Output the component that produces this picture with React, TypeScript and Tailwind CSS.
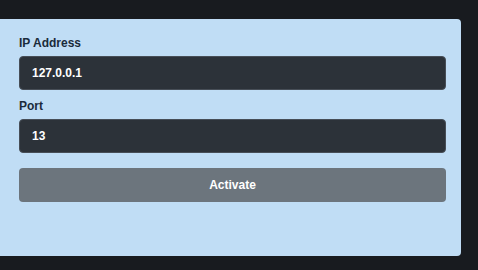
export default function App() {
  const font = { fontFamily: '"Liberation Sans", Arial, sans-serif' };
  return (
    <div className="h-[270px] w-[478px] bg-[#181b1f] pt-[19px]" style={font}>
      <div className="flex h-[237px] w-[461px] flex-col rounded-r-[4px] bg-[#c0ddf5] pl-[19px] pr-[15px] pt-[15px]">
        <label htmlFor="ip" className="mb-[4px] block text-[12px] font-bold leading-[18px] text-[#1b2b3b]">
          IP Address
        </label>
        <input
          id="ip"
          defaultValue="127.0.0.1"
          className="h-[34px] w-full rounded-[4px] border border-[#474e57] bg-[#2c3239] px-[12px] text-[12px] font-bold text-white outline-none"
        />
        <label htmlFor="port" className="mb-[4px] mt-[7px] block text-[12px] font-bold leading-[18px] text-[#1b2b3b]">
          Port
        </label>
        <input
          id="port"
          defaultValue="13"
          className="h-[34px] w-full rounded-[4px] border border-[#474e57] bg-[#2c3239] px-[12px] text-[12px] font-bold text-white outline-none"
        />
        <button
          type="button"
          className="mt-[15px] h-[34px] w-full rounded-[4px] bg-[#6c757d] text-[12px] font-bold text-white"
        >
          Activate
        </button>
      </div>
    </div>
  );
}
